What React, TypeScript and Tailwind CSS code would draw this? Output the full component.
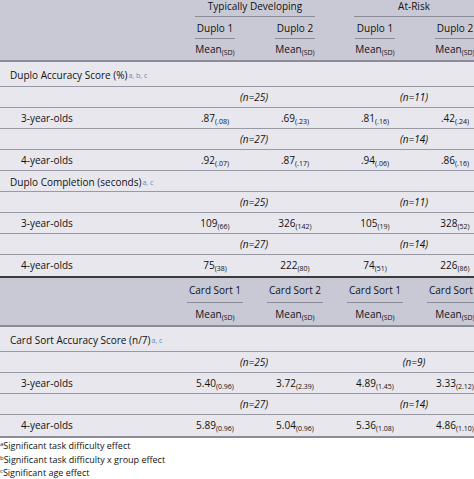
import React from "react";

type Val = { m: string; sd: string };

const font = { fontFamily: '"Open Sans", "Noto Sans", sans-serif' };

function Sup({ children }: { children: React.ReactNode }) {
  return <sup className="text-[7px] text-[#5d8dc0] ml-[1px] relative -top-[1px]">{children}</sup>;
}

function Cell({ children }: { children?: React.ReactNode }) {
  return (
    <div className="w-[80px] shrink-0">
      <div className="ml-[5px] w-[40px] flex justify-center whitespace-nowrap">{children}</div>
    </div>
  );
}

function Value({ v }: { v: Val }) {
  return (
    <span>
      {v.m}
      <sub className="text-[7px] bottom-[-2px]">{v.sd}</sub>
    </span>
  );
}

function Mean() {
  return (
    <span>
      Mean<sub className="text-[7px] bottom-[-2px]">(SD)</sub>
    </span>
  );
}

function Row({ h, children, border = "border-b border-[#9a9aa6]" }: { h: string; children: React.ReactNode; border?: string }) {
  return <div className={`flex items-center ${h} ${border}`}>{children}</div>;
}

function GroupRow({ label, values, last }: { label: string; values: Val[]; last?: boolean }) {
  return (
    <Row h="h-[21px]" border={last ? "" : "border-b border-[#9a9aa6]"}>
      <div className="w-[190px] shrink-0 pl-[21px]">{label}</div>
      {values.map((v, i) => (
        <Cell key={i}>
          <Value v={v} />
        </Cell>
      ))}
    </Row>
  );
}

function NRow({ a, b }: { a: string; b: string }) {
  return (
    <Row h="h-[21px]">
      <div className="w-[190px] shrink-0" />
      <div className="w-[160px] shrink-0 flex justify-center italic">
        <span className="-ml-[32px]">{a}</span>
      </div>
      <div className="w-[160px] shrink-0 flex justify-center italic">
        <span className="-ml-[32px]">{b}</span>
      </div>
    </Row>
  );
}

function SectionRow({ label, sup, h }: { label: string; sup: string; h: string }) {
  return (
    <Row h={h}>
      <div className="pl-[10px] whitespace-nowrap pt-[3px]">
        {label}
        <Sup>{sup}</Sup>
      </div>
    </Row>
  );
}

export default function App() {
  return (
    <div className="w-[474px] h-[479px] overflow-hidden bg-white text-[10px] text-[#111]" style={font}>
      <div className="w-[510px]">
        {/* header 1 */}
        <div className="bg-[#c9c9d6] border-b-2 border-[#8c8c98]">
          <div className="flex h-[17px] items-start">
            <div className="w-[190px] shrink-0" />
            <div className="w-[160px] shrink-0">
              <div className="ml-[5px] w-[120px] border-b border-[#8c8c98] h-[17px] flex justify-center leading-[12px]">
                Typically Developing
              </div>
            </div>
            <div className="w-[160px] shrink-0">
              <div className="ml-[4px] w-[120px] border-b border-[#8c8c98] h-[17px] flex justify-center leading-[12px]">
                At-Risk
              </div>
            </div>
          </div>
          <div className="flex h-[22px] items-center">
            <div className="w-[190px] shrink-0" />
            {["Duplo 1", "Duplo 2", "Duplo 1", "Duplo 2"].map((t, i) => (
              <div key={i} className="w-[80px] shrink-0 h-full">
                <div className="ml-[5px] w-[40px] h-full flex items-center justify-center border-b border-[#8c8c98] whitespace-nowrap pt-[1px]">
                  {t}
                </div>
              </div>
            ))}
          </div>
          <div className="flex h-[21px] items-center">
            <div className="w-[190px] shrink-0" />
            {[0, 1, 2, 3].map((i) => (
              <Cell key={i}>
                <Mean />
              </Cell>
            ))}
          </div>
        </div>

        <div className="bg-[#e7e7ed]">
          <SectionRow label="Duplo Accuracy Score (%)" sup="a, b, c" h="h-[25px]" />
          <NRow a="(n=25)" b="(n=11)" />
          <GroupRow
            label="3-year-olds"
            values={[
              { m: ".87", sd: "(.08)" },
              { m: ".69", sd: "(.23)" },
              { m: ".81", sd: "(.16)" },
              { m: ".42", sd: "(.24)" },
            ]}
          />
          <NRow a="(n=27)" b="(n=14)" />
          <GroupRow
            label="4-year-olds"
            values={[
              { m: ".92", sd: "(.07)" },
              { m: ".87", sd: "(.17)" },
              { m: ".94", sd: "(.06)" },
              { m: ".86", sd: "(.16)" },
            ]}
          />
          <SectionRow label="Duplo Completion (seconds)" sup="a, c" h="h-[21px]" />
          <NRow a="(n=25)" b="(n=11)" />
          <GroupRow
            label="3-year-olds"
            values={[
              { m: "109", sd: "(66)" },
              { m: "326", sd: "(142)" },
              { m: "105", sd: "(19)" },
              { m: "328", sd: "(52)" },
            ]}
          />
          <NRow a="(n=27)" b="(n=14)" />
          <GroupRow
            last
            label="4-year-olds"
            values={[
              { m: "75", sd: "(38)" },
              { m: "222", sd: "(80)" },
              { m: "74", sd: "(51)" },
              { m: "226", sd: "(86)" },
            ]}
          />
        </div>

        {/* header 2 */}
        <div className="bg-[#c9c9d6] border-t-2 border-[#3a3a3a] border-b-2 border-b-[#8c8c98]">
          <div className="flex h-[25px] items-center">
            <div className="w-[190px] shrink-0" />
            {["Card Sort 1", "Card Sort 2", "Card Sort 1", "Card Sort 2"].map((t, i) => (
              <div key={i} className="w-[80px] shrink-0 h-full">
                <div className="-ml-[3px] w-[56px] h-full flex items-center justify-center border-b border-[#8c8c98] whitespace-nowrap pt-[1px]">
                  {t}
                </div>
              </div>
            ))}
          </div>
          <div className="flex h-[22px] items-center">
            <div className="w-[190px] shrink-0" />
            {[0, 1, 2, 3].map((i) => (
              <Cell key={i}>
                <Mean />
              </Cell>
            ))}
          </div>
        </div>

        <div className="bg-[#e7e7ed] border-b-2 border-[#8c8c98]">
          <SectionRow label="Card Sort Accuracy Score (n/7)" sup="a, c" h="h-[25px]" />
          <NRow a="(n=25)" b="(n=9)" />
          <GroupRow
            label="3-year-olds"
            values={[
              { m: "5.40", sd: "(0.96)" },
              { m: "3.72", sd: "(2.39)" },
              { m: "4.89", sd: "(1.45)" },
              { m: "3.33", sd: "(2.12)" },
            ]}
          />
          <NRow a="(n=27)" b="(n=14)" />
          <GroupRow
            last
            label="4-year-olds"
            values={[
              { m: "5.89", sd: "(0.96)" },
              { m: "5.04", sd: "(0.96)" },
              { m: "5.36", sd: "(1.08)" },
              { m: "4.86", sd: "(1.10)" },
            ]}
          />
        </div>

        <div className="text-[9px] leading-[13.5px] pt-[1px]">
          <div>
            <sup className="text-[6px]">a</sup>Significant task difficulty effect
          </div>
          <div>
            <sup className="text-[6px]">b</sup>Significant task difficulty x group effect
          </div>
          <div>
            <sup className="text-[6px]">c</sup>Significant age effect
          </div>
        </div>
      </div>
    </div>
  );
}
